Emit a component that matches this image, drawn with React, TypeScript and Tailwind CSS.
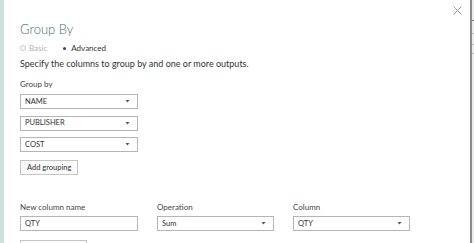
import React from 'react';

const font = { fontFamily: 'Lato, "Open Sans", sans-serif' };

function Dropdown({ value, width }: { value: string; width: string }) {
  return (
    <div className={`${width} h-[15px] border border-[#b5b5b5] bg-white flex items-center justify-between pl-[4px] pr-[7px]`}>
      <span className="text-[7.5px] text-[#333] leading-none">{value}</span>
      <svg width="5" height="3" viewBox="0 0 5 3">
        <path d="M0.5 0 L4.5 0 L2.5 2.5 Z" fill="#555" />
      </svg>
    </div>
  );
}

export default function App() {
  return (
    <div className="w-[474px] h-[243px] overflow-hidden bg-white flex" style={font}>
      {/* bande à gauche */}
      <div className="w-[4px] bg-[#cfe2da]" />

      <div className="flex-1 relative pl-[16px] pt-[23px]">
        <button className="absolute right-[8px] top-[6px]">
          <svg width="9" height="9" viewBox="0 0 9 9">
            <path d="M0.5 0.5 L8.5 8.5 M8.5 0.5 L0.5 8.5" stroke="#8f8f8f" strokeWidth="0.9" />
          </svg>
        </button>

        <h1 className="text-[13px] font-light text-[#4d6e62] leading-none">Group By</h1>

        <div className="flex items-center gap-[14px] mt-[8px] text-[8px] leading-none">
          <label className="flex items-center gap-[3px] text-[#b0b0b0]">
            <span className="w-[6px] h-[6px] rounded-full border border-[#c8c8c8]" />
            Basic
          </label>
          <label className="flex items-center gap-[4px] text-[#333]">
            <span className="w-[6px] h-[6px] rounded-full flex items-center justify-center">
              <span className="w-[3px] h-[3px] rounded-full bg-[#444]" />
            </span>
            Advanced
          </label>
        </div>

        <p className="mt-[7px] text-[9px] text-[#333] leading-none">
          Specify the columns to group by and one or more outputs.
        </p>

        <p className="mt-[12px] text-[8px] text-[#444] leading-none">Group by</p>

        <div className="flex flex-col gap-[6.5px] mt-[6px]">
          <Dropdown value="NAME" width="w-[118px]" />
          <Dropdown value="PUBLISHER" width="w-[118px]" />
          <Dropdown value="COST" width="w-[118px]" />
        </div>

        <button className="mt-[8px] h-[15px] px-[6px] border border-[#c4c4c4] bg-[#fafafa] text-[7.5px] text-[#333] leading-none">
          Add grouping
        </button>

        <div className="flex gap-[19px] mt-[27px]">
          <div className="flex flex-col gap-[5px]">
            <span className="text-[8px] text-[#444] leading-none">New column name</span>
            <div className="w-[118px] h-[15px] border border-[#b5b5b5] flex items-center pl-[4px]">
              <span className="text-[7.5px] text-[#333] leading-none">QTY</span>
            </div>
          </div>
          <div className="flex flex-col gap-[5px]">
            <span className="text-[8px] text-[#444] leading-none">Operation</span>
            <Dropdown value="Sum" width="w-[117px]" />
          </div>
          <div className="flex flex-col gap-[5px]">
            <span className="text-[8px] text-[#444] leading-none">Column</span>
            <Dropdown value="QTY" width="w-[117px]" />
          </div>
        </div>

        <div className="mt-[9px] w-[67px] h-[15px] border border-[#c4c4c4] bg-[#fafafa]" />
      </div>

      {/* barre de défilement à droite */}
      <div className="w-[2px] bg-[#8c8c8c]" />
      <div className="w-[2px] bg-[#ececec] flex flex-col">
        <div className="h-[20px]" />
        <div className="h-px bg-[#777]" />
        <div className="h-[12px]" />
        <div className="h-px bg-[#bbb]" />
        <div className="h-[10px]" />
        <div className="h-px bg-[#bbb]" />
        <div className="h-[8px]" />
        <div className="h-px bg-[#bbb]" />
      </div>
    </div>
  );
}
